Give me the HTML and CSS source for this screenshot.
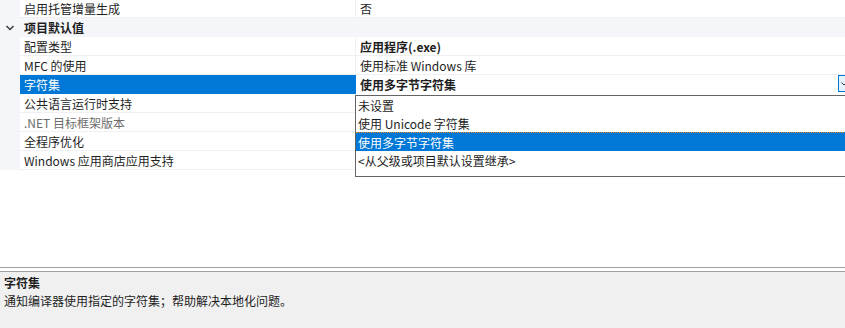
FILE: index.html
```html
<!DOCTYPE html>
<html lang="zh-CN">
<head>
<meta charset="utf-8">
<link rel="stylesheet" href="styles.css">
</head>
<body>
<div class="page">
  <div class="grid">
    <div class="row">
      <div class="gutter"></div>
      <div class="name">启用托管增量生成</div>
      <div class="value">否</div>
    </div>
    <div class="row category">
      <div class="gutter"><svg width="10" height="8" viewBox="0 0 10 8"><path d="M1.5 2 L5 5.5 L8.5 2" fill="none" stroke="#3c3c3c" stroke-width="1.5"/></svg></div>
      <div class="name bold">项目默认值</div>
      <div class="value"></div>
    </div>
    <div class="row">
      <div class="gutter"></div>
      <div class="name">配置类型</div>
      <div class="value bold">应用程序(.exe)</div>
    </div>
    <div class="row">
      <div class="gutter"></div>
      <div class="name">MFC 的使用</div>
      <div class="value">使用标准 Windows 库</div>
    </div>
    <div class="row selected">
      <div class="gutter"></div>
      <div class="name">字符集</div>
      <div class="value bold editing">使用多字节字符集<span class="dd-btn"><svg width="6" height="4" viewBox="0 0 6 4"><path d="M0.5 0.5 L3 3 L5.5 0.5" fill="none" stroke="#333" stroke-width="1"/></svg></span></div>
    </div>
    <div class="row">
      <div class="gutter"></div>
      <div class="name">公共语言运行时支持</div>
      <div class="value"></div>
    </div>
    <div class="row">
      <div class="gutter"></div>
      <div class="name disabled">.NET 目标框架版本</div>
      <div class="value"></div>
    </div>
    <div class="row">
      <div class="gutter"></div>
      <div class="name">全程序优化</div>
      <div class="value"></div>
    </div>
    <div class="row">
      <div class="gutter"></div>
      <div class="name">Windows 应用商店应用支持</div>
      <div class="value"></div>
    </div>

    <div class="dropdown">
      <div class="item">未设置</div>
      <div class="item">使用 Unicode 字符集</div>
      <div class="item active">使用多字节字符集</div>
      <div class="item">&lt;从父级或项目默认设置继承&gt;</div>
    </div>
  </div>

  <div class="help">
    <div class="help-title">字符集</div>
    <div class="help-text">通知编译器使用指定的字符集；帮助解决本地化问题。</div>
  </div>
</div>
</body>
</html>
```
FILE: styles.css
```css
html, body {
  margin: 0;
  padding: 0;
  background: #ffffff;
}
body {
  font-family: "Noto Sans CJK SC", "Noto Sans", sans-serif;
  font-size: 12px;
  color: #1e1e1e;
  overflow: hidden;
}
.page {
  width: 845px;
  height: 328px;
  display: flex;
  flex-direction: column;
}
.grid {
  position: relative;
  height: 268px;
  margin-top: -1px;
  flex: none;
}
.row {
  display: grid;
  grid-template-columns: 20px 336px 1fr;
  height: 19px;
}
.gutter {
  background: #f5f6f9;
  display: flex;
  align-items: center;
  justify-content: center;
  padding-top: 1px;
  box-sizing: border-box;
}
.name, .value {
  box-sizing: border-box;
  height: 19px;
  line-height: 20px;
  border-bottom: 1px solid #f0f0f2;
  white-space: nowrap;
  overflow: hidden;
}
.name {
  padding-left: 4px;
  border-right: 1px solid #f0f0f2;
}
.value {
  padding-left: 4px;
  position: relative;
}
.bold {
  font-weight: 700;
}
.category .name, .category .value {
  background: #f5f6f9;
  border-color: #f5f6f9;
}
.disabled {
  color: #6d6d6d;
}
.selected .name {
  background: #0078d7;
  color: #ffffff;
  border-color: #0078d7;
}
.selected .value {
  border-bottom: none;
}
.dd-btn {
  position: absolute;
  left: 482px;
  top: 0;
  width: 14px;
  height: 17px;
  box-sizing: border-box;
  border: 1px solid #0078d7;
  background: #e5f1fb;
  display: flex;
  align-items: center;
  padding-left: 2px;
}
.dropdown {
  position: absolute;
  left: 355px;
  top: 96px;
  width: 500px;
  height: 82px;
  box-sizing: border-box;
  border: 1px solid #646464;
  background: #ffffff;
}
.item {
  height: 18px;
  line-height: 19px;
  padding-left: 2px;
  white-space: nowrap;
}
.item.active {
  background: #0078d7;
  color: #ffffff;
  height: 19px;
  box-sizing: border-box;
  border-top: 1px dotted #e08a1e;
}
.help {
  flex: 1;
  border-top: 1px solid #a0a0a0;
  display: flex;
  flex-direction: column;
  background: #f0f0f0;
}
.help::before {
  content: "";
  display: block;
  height: 3px;
  background: #ffffff;
  border-bottom: 1px solid #a0a0a0;
}
.help-title {
  font-weight: 700;
  padding-left: 4px;
  margin-top: 2px;
  line-height: 18px;
}
.help-text {
  padding-left: 4px;
  line-height: 18px;
}
```
